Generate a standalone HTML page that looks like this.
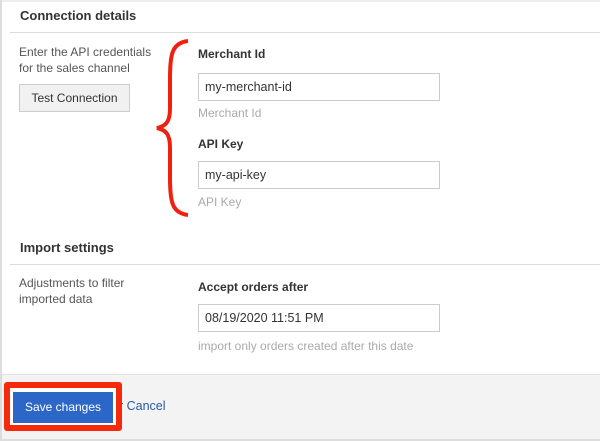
<!DOCTYPE html>
<html><head><style>
body{margin:0;width:600px;height:441px;background:#fff;font-family:"Liberation Sans",sans-serif;font-size:12px;color:#333;position:relative;overflow:hidden}
.a{position:absolute;white-space:nowrap}
.h{font-weight:bold;font-size:13px;color:#333}
.d{color:#555;font-size:12px}
.l{font-weight:bold;font-size:12px;color:#333}
.in{position:absolute;left:198px;width:240px;height:26px;border:1px solid #ccc;background:#fff;box-sizing:content-box}
.in span{position:absolute;left:6px;top:6px;font-size:12.5px;color:#333}
.hint{color:#aaa;font-size:12px}
</style></head><body>
<div class="a" style="left:0;top:0;width:600px;height:2px;background:#eee"></div>
<div class="a" style="left:0;top:0;width:2px;height:441px;background:#ddd"></div>
<div class="a h" style="left:20px;top:8px">Connection details</div>
<div class="a" style="left:10px;top:32px;width:590px;height:1px;background:#ddd"></div>
<div class="a d" style="left:19px;top:44px;line-height:16px">Enter the API credentials<br>for the sales channel</div>
<div class="a" style="left:19px;top:84px;width:111px;height:28px;border:1px solid #ccc;background:#f1f1f1;box-sizing:border-box;font-size:12px;line-height:26px;text-align:center;color:#333">Test Connection</div>
<svg class="a" style="left:150px;top:38px" width="45" height="180" viewBox="0 0 45 180"><path d="M38 3 C22 5 20 16 20 40 L20 70 C20 84 16 88 7 90 C16 92 20 96 20 110 L20 140 C20 164 22 175 38 177" fill="none" stroke="#f0200e" stroke-width="4"/></svg>
<div class="a l" style="left:198px;top:47px">Merchant Id</div>
<div class="in" style="top:73px"><span>my-merchant-id</span></div>
<div class="a hint" style="left:198px;top:106px">Merchant Id</div>
<div class="a l" style="left:198px;top:137px">API Key</div>
<div class="in" style="top:161px"><span>my-api-key</span></div>
<div class="a hint" style="left:198px;top:195px">API Key</div>
<div class="a h" style="left:20px;top:240px">Import settings</div>
<div class="a" style="left:10px;top:264px;width:590px;height:1px;background:#ddd"></div>
<div class="a d" style="left:19px;top:275px;line-height:16px">Adjustments to filter<br>imported data</div>
<div class="a l" style="left:198px;top:280px">Accept orders after</div>
<div class="in" style="top:304px"><span>08/19/2020 11:51 PM</span></div>
<div class="a hint" style="left:198px;top:339px">import only orders created after this date</div>
<div class="a" style="left:2px;top:374px;width:598px;height:66px;background:#f3f3f3;border-top:1px solid #e3e3e3"></div>
<div class="a" style="left:2px;top:439px;width:598px;height:2px;background:#ddd"></div>
<div class="a" style="left:112px;top:399px;font-size:12.5px;color:#2a5aa8">or Cancel</div>
<div class="a" style="left:4px;top:382px;width:118px;height:49px;background:#f52a0c;border-radius:3px"></div>
<div class="a" style="left:10px;top:388px;width:106px;height:37px;background:#fff"></div>
<div class="a" style="left:13px;top:392px;width:100px;height:31px;background:#2c66c7;color:#fff;font-size:12px;line-height:31px;text-align:center">Save changes</div>
</body></html>
